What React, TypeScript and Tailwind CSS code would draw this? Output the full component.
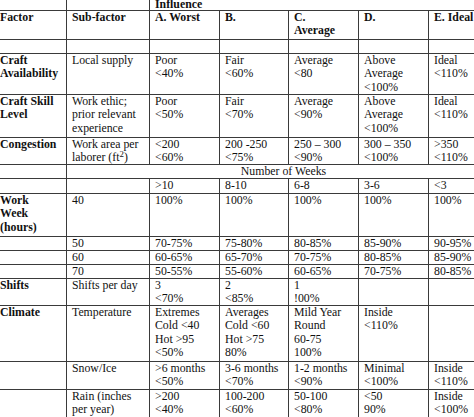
import React from "react";

type CellProps = {
    children?: React.ReactNode;
    bold?: boolean;
    span?: string;
    center?: boolean;
};

const Cell: React.FC<CellProps> = ({children, bold, span, center}) => (
    <div
        className={
            "bg-white px-[5px] pt-0 whitespace-nowrap overflow-hidden " +
            (bold ? "font-bold " : "") +
            (center ? "text-center " : "") +
            (span ?? "")
        }
    >
        {children}
    </div>
);

const lines = (...parts: React.ReactNode[]) =>
    parts.map((p, i) => (
        <React.Fragment key={i}>
            {i > 0 && <br/>}
            {p}
        </React.Fragment>
    ));

const App: React.FC = () => {
    return (
        <div className="w-[474px] h-[417px] overflow-hidden bg-white">
            <div
                className="ml-[-6px] mt-[-3px] w-[507px] p-px bg-[#3a3a3a] grid gap-px grid-cols-[71px_82px_69px_68px_69px_69px_71px] grid-rows-[12px_28px_13px_40px_42px_26px_13px_14px_42px_13px_13px_13px_26px_55px_27px_27px] text-[11.8px] leading-[13.4px] text-[#111]"
                style={{fontFamily: '"Liberation Serif", "Times New Roman", serif'}}
            >
                {/* influence row */}
                <Cell/>
                <Cell/>
                <Cell bold span="col-span-5">Influence</Cell>

                {/* header */}
                <Cell bold>Factor</Cell>
                <Cell bold>Sub-factor</Cell>
                <Cell bold>A. Worst</Cell>
                <Cell bold>B.</Cell>
                <Cell bold>{lines("C.", "Average")}</Cell>
                <Cell bold>D.</Cell>
                <Cell bold>E. Ideal</Cell>

                {/* blank */}
                <Cell/><Cell/><Cell/><Cell/><Cell/><Cell/><Cell/>

                <Cell bold>{lines("Craft", "Availability")}</Cell>
                <Cell>Local supply</Cell>
                <Cell>{lines("Poor", "<40%")}</Cell>
                <Cell>{lines("Fair", "<60%")}</Cell>
                <Cell>{lines("Average", "<80")}</Cell>
                <Cell>{lines("Above", "Average", "<100%")}</Cell>
                <Cell>{lines("Ideal", "<110%")}</Cell>

                <Cell bold>{lines("Craft Skill", "Level")}</Cell>
                <Cell>{lines("Work ethic;", "prior relevant", "experience")}</Cell>
                <Cell>{lines("Poor", "<50%")}</Cell>
                <Cell>{lines("Fair", "<70%")}</Cell>
                <Cell>{lines("Average", "<90%")}</Cell>
                <Cell>{lines("Above", "Average", "<100%")}</Cell>
                <Cell>{lines("Ideal", "<110%")}</Cell>

                <Cell bold>Congestion</Cell>
                <Cell>{lines("Work area per", <>laborer (ft<sup>2</sup>)</>)}</Cell>
                <Cell>{lines("<200", "<60%")}</Cell>
                <Cell>{lines("200 -250", "<75%")}</Cell>
                <Cell>{lines("250 – 300", "<90%")}</Cell>
                <Cell>{lines("300 – 350", "<100%")}</Cell>
                <Cell>{lines(">350", "<110%")}</Cell>

                <Cell/>
                <Cell center span="col-span-6">Number of Weeks</Cell>

                <Cell/>
                <Cell/>
                <Cell>&gt;10</Cell>
                <Cell>8-10</Cell>
                <Cell>6-8</Cell>
                <Cell>3-6</Cell>
                <Cell>&lt;3</Cell>

                <Cell bold>{lines("Work", "Week", "(hours)")}</Cell>
                <Cell>40</Cell>
                <Cell>100%</Cell>
                <Cell>100%</Cell>
                <Cell>100%</Cell>
                <Cell>100%</Cell>
                <Cell>100%</Cell>

                <Cell/>
                <Cell>50</Cell>
                <Cell>70-75%</Cell>
                <Cell>75-80%</Cell>
                <Cell>80-85%</Cell>
                <Cell>85-90%</Cell>
                <Cell>90-95%</Cell>

                <Cell/>
                <Cell>60</Cell>
                <Cell>60-65%</Cell>
                <Cell>65-70%</Cell>
                <Cell>70-75%</Cell>
                <Cell>80-85%</Cell>
                <Cell>85-90%</Cell>

                <Cell/>
                <Cell>70</Cell>
                <Cell>50-55%</Cell>
                <Cell>55-60%</Cell>
                <Cell>60-65%</Cell>
                <Cell>70-75%</Cell>
                <Cell>80-85%</Cell>

                <Cell bold>Shifts</Cell>
                <Cell>Shifts per day</Cell>
                <Cell>{lines("3", "<70%")}</Cell>
                <Cell>{lines("2", "<85%")}</Cell>
                <Cell>{lines("1", "!00%")}</Cell>
                <Cell/>
                <Cell/>

                <Cell bold>Climate</Cell>
                <Cell>Temperature</Cell>
                <Cell>{lines("Extremes", "Cold <40", "Hot >95", "<50%")}</Cell>
                <Cell>{lines("Averages", "Cold <60", "Hot >75", "80%")}</Cell>
                <Cell>{lines("Mild Year", "Round", "60-75", "100%")}</Cell>
                <Cell>{lines("Inside", "<110%")}</Cell>
                <Cell/>

                <Cell/>
                <Cell>Snow/Ice</Cell>
                <Cell>{lines(">6 months", "<50%")}</Cell>
                <Cell>{lines("3-6 months", "<70%")}</Cell>
                <Cell>{lines("1-2 months", "<90%")}</Cell>
                <Cell>{lines("Minimal", "<100%")}</Cell>
                <Cell>{lines("Inside", "<110%")}</Cell>

                <Cell/>
                <Cell>{lines("Rain (inches", "per year)")}</Cell>
                <Cell>{lines(">200", "<40%")}</Cell>
                <Cell>{lines("100-200", "<60%")}</Cell>
                <Cell>{lines("50-100", "<80%")}</Cell>
                <Cell>{lines("<50", "90%")}</Cell>
                <Cell>{lines("Inside", "<100%")}</Cell>
            </div>
        </div>
    );
};

export default App;
